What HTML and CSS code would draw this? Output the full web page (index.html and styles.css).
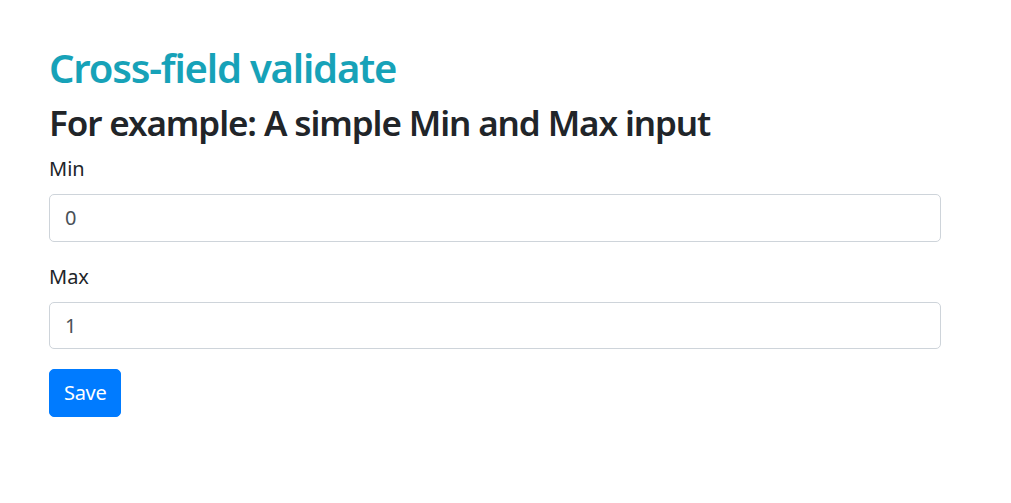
FILE: index.html
```html
<!DOCTYPE html>
<html lang="en">
<head>
<meta charset="utf-8">
<title>Cross-field validate</title>
<link rel="stylesheet" href="styles.css">
</head>
<body>
<main class="page">
  <h2 class="title">Cross-field validate</h2>
  <h3 class="subtitle">For example: A simple Min and Max input</h3>
  <form class="form">
    <div class="form-group">
      <label class="label" for="min">Min</label>
      <input class="input" id="min" type="text" value="0">
    </div>
    <div class="form-group">
      <label class="label" for="max">Max</label>
      <input class="input" id="max" type="text" value="1">
    </div>
    <button class="btn" type="button">Save</button>
  </form>
</main>
</body>
</html>
```
FILE: styles.css
```css
html, body {
  margin: 0;
  padding: 0;
  background: #fff;
}
body {
  font-family: "Noto Sans", "Open Sans", sans-serif;
  font-size: 20px;
  line-height: 1.5;
  color: #212529;
}
.page {
  width: 892px;
  padding: 44px 0 0 49px;
}
.title {
  margin: 0 0 10px;
  font-size: 40px;
  font-weight: 600;
  line-height: 1.2;
  letter-spacing: -1.2px;
  color: #17a2b8;
}
.subtitle {
  margin: 0 0 10px;
  font-size: 35px;
  font-weight: 600;
  line-height: 1.2;
  letter-spacing: -1.1px;
  color: #212529;
}
.form-group {
  display: flex;
  flex-direction: column;
  margin-bottom: 20px;
}
.label {
  display: block;
  margin-bottom: 10px;
  line-height: 30px;
}
.input {
  box-sizing: border-box;
  width: 100%;
  height: 47.5px;
  padding: 7.5px 15px;
  font-family: inherit;
  font-size: 20px;
  color: #495057;
  background: #fff;
  border: 1.25px solid #ced4da;
  border-radius: 5px;
  outline: none;
}
.btn {
  box-sizing: border-box;
  height: 47.5px;
  padding: 7.5px 14px;
  font-family: inherit;
  font-size: 20px;
  letter-spacing: -0.3px;
  color: #fff;
  background: #007bff;
  border: 1.25px solid #007bff;
  border-radius: 5px;
}
```
